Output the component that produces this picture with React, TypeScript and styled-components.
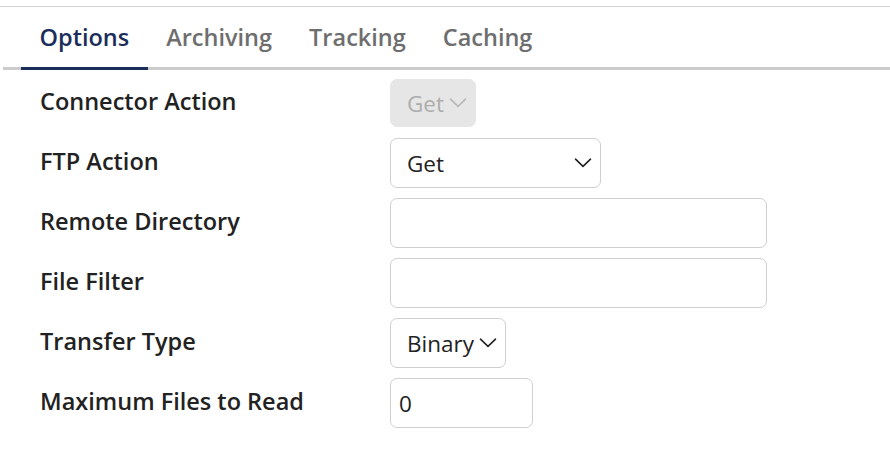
import React from "react";
import styled, { createGlobalStyle } from "styled-components";

const GlobalStyle = createGlobalStyle`
  html, body { margin: 0; padding: 0; background: #fff; }
  body { font-family: "Open Sans", "Noto Sans", Arial, sans-serif; }
  * { box-sizing: border-box; }
`;

const Page = styled.div`
  width: 890px;
  height: 462px;
  padding-top: 6px;
  background: #fff;
`;

const TopRule = styled.div`
  height: 1px;
  background: #d2d2d2;
`;

const TabBar = styled.div`
  display: flex;
  margin-left: 3px;
  padding-left: 18px;
  border-bottom: 3px solid #cccccc;
`;

const Tab = styled.div<{ $active?: boolean }>`
  padding: 15px 18.5px 15px;
  font-size: 23.5px;
  line-height: 30px;
  font-weight: 600;
  color: ${(p) => (p.$active ? "#1b2d5b" : "#6e6e6e")};
  border-bottom: 3px solid ${(p) => (p.$active ? "#1b2d5b" : "transparent")};
  margin-bottom: -3px;
`;

const Form = styled.div`
  display: grid;
  grid-template-columns: 350px auto;
  grid-auto-rows: 50px;
  row-gap: 10px;
  margin-top: 8px;
  padding-left: 40px;
  align-items: center;
  justify-items: start;
`;

const Label = styled.div`
  font-size: 23.5px;
  font-weight: 600;
  color: #222;
  line-height: 30px;
  margin-top: -5px;
`;

const SelectBox = styled.div<{ $width?: number; $disabled?: boolean }>`
  display: flex;
  align-items: center;
  justify-content: space-between;
  gap: 5px;
  height: ${(p) => (p.$disabled ? 48 : 50)}px;
  width: ${(p) => (p.$width ? `${p.$width}px` : "auto")};
  padding: 0 8px 0 16px;
  border: 1px solid ${(p) => (p.$disabled ? "#e6e6e6" : "#cfcfcf")};
  border-radius: 7px;
  background: ${(p) => (p.$disabled ? "#e6e6e6" : "#fff")};
  color: ${(p) => (p.$disabled ? "#adadad" : "#222")};
  font-size: 22.5px;
`;

const TextBox = styled.div<{ $width: number }>`
  display: flex;
  align-items: center;
  height: 50px;
  width: ${(p) => p.$width}px;
  padding: 0 8px;
  border: 1px solid #cfcfcf;
  border-radius: 7px;
  background: #fff;
  color: #222;
  font-size: 22.5px;
`;

const Chevron = ({ color = "#222" }: { color?: string }) => (
  <svg width="18" height="10" viewBox="0 0 18 10" fill="none">
    <path d="M1.5 1.2 L9 8.4 L16.5 1.2" stroke={color} strokeWidth="1.6" strokeLinecap="round" strokeLinejoin="round" />
  </svg>
);

export default function App() {
  return (
    <Page>
      <GlobalStyle />
      <TopRule />
      <TabBar>
        <Tab $active>Options</Tab>
        <Tab>Archiving</Tab>
        <Tab>Tracking</Tab>
        <Tab>Caching</Tab>
      </TabBar>
      <Form>
        <Label>Connector Action</Label>
        <SelectBox $disabled>
          <span>Get</span>
          <Chevron color="#b8b8b8" />
        </SelectBox>

        <Label>FTP Action</Label>
        <SelectBox $width={211}>
          <span>Get</span>
          <Chevron />
        </SelectBox>

        <Label>Remote Directory</Label>
        <TextBox $width={377} />

        <Label>File Filter</Label>
        <TextBox $width={377} />

        <Label>Transfer Type</Label>
        <SelectBox>
          <span>Binary</span>
          <Chevron />
        </SelectBox>

        <Label>Maximum Files to Read</Label>
        <TextBox $width={143}>0</TextBox>
      </Form>
    </Page>
  );
}
